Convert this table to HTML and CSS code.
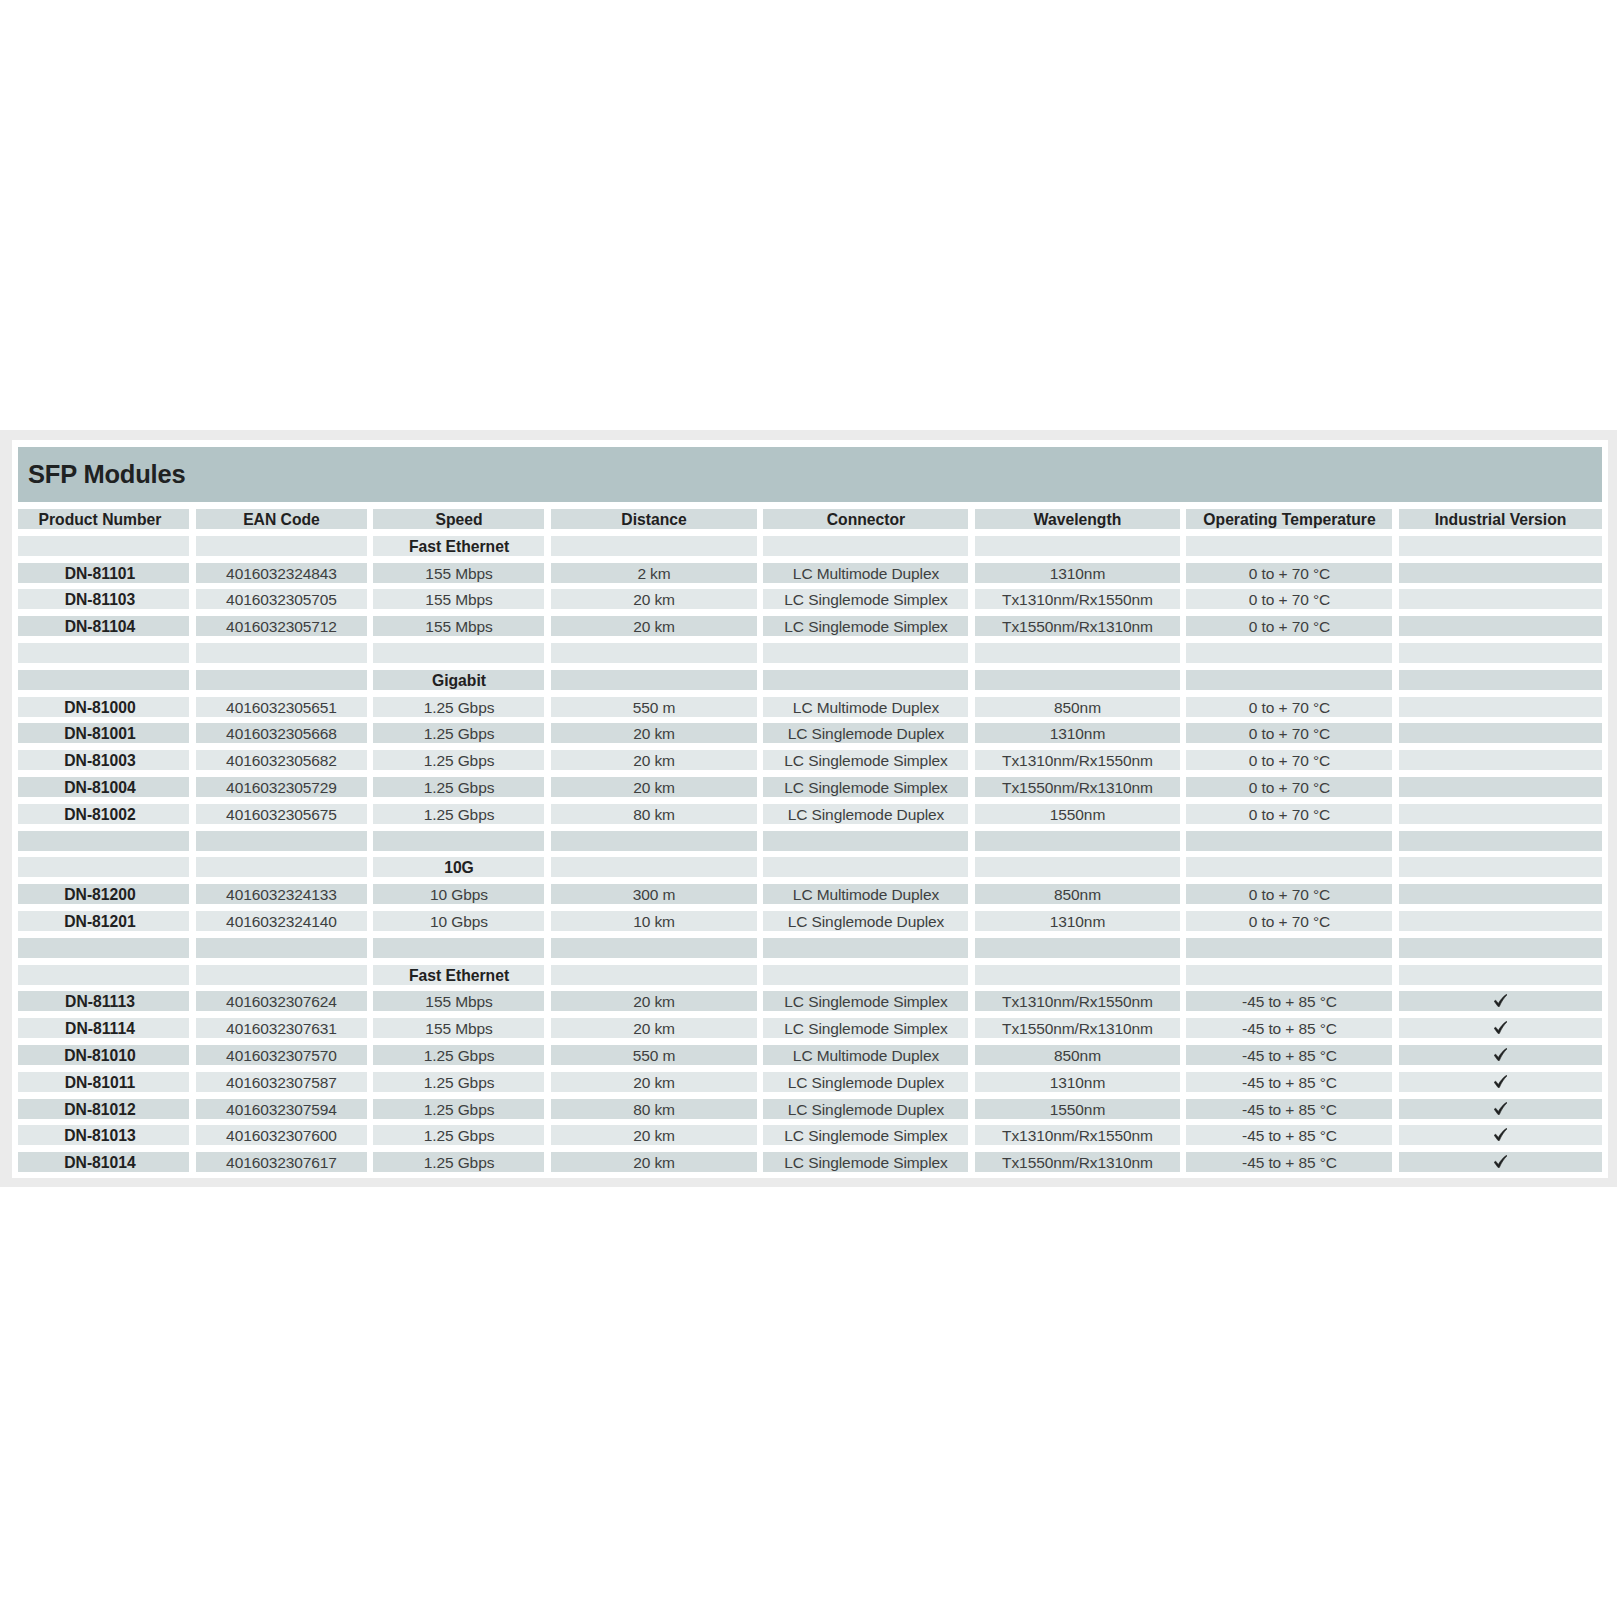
FILE: index.html
```html
<!DOCTYPE html>
<html lang="en">
<head>
<meta charset="utf-8">
<title>SFP Modules</title>
<link rel="stylesheet" href="styles.css">
</head>
<body>
<div class="frame">
  <div class="sheet">
    <div class="title">SFP Modules</div>
    <div class="rows">
      <div class="row head"><div class="c">Product Number</div><div class="c">EAN Code</div><div class="c">Speed</div><div class="c">Distance</div><div class="c">Connector</div><div class="c">Wavelength</div><div class="c">Operating Temperature</div><div class="c">Industrial Version</div></div>
      <div class="row"><div class="c"></div><div class="c"></div><div class="c b">Fast Ethernet</div><div class="c"></div><div class="c"></div><div class="c"></div><div class="c"></div><div class="c"></div></div>
      <div class="row"><div class="c b">DN-81101</div><div class="c">4016032324843</div><div class="c">155 Mbps</div><div class="c">2 km</div><div class="c">LC Multimode Duplex</div><div class="c">1310nm</div><div class="c">0 to + 70 °C</div><div class="c"></div></div>
      <div class="row"><div class="c b">DN-81103</div><div class="c">4016032305705</div><div class="c">155 Mbps</div><div class="c">20 km</div><div class="c">LC Singlemode Simplex</div><div class="c">Tx1310nm/Rx1550nm</div><div class="c">0 to + 70 °C</div><div class="c"></div></div>
      <div class="row"><div class="c b">DN-81104</div><div class="c">4016032305712</div><div class="c">155 Mbps</div><div class="c">20 km</div><div class="c">LC Singlemode Simplex</div><div class="c">Tx1550nm/Rx1310nm</div><div class="c">0 to + 70 °C</div><div class="c"></div></div>
      <div class="row"><div class="c"></div><div class="c"></div><div class="c"></div><div class="c"></div><div class="c"></div><div class="c"></div><div class="c"></div><div class="c"></div></div>
      <div class="row"><div class="c"></div><div class="c"></div><div class="c b">Gigabit</div><div class="c"></div><div class="c"></div><div class="c"></div><div class="c"></div><div class="c"></div></div>
      <div class="row"><div class="c b">DN-81000</div><div class="c">4016032305651</div><div class="c">1.25 Gbps</div><div class="c">550 m</div><div class="c">LC Multimode Duplex</div><div class="c">850nm</div><div class="c">0 to + 70 °C</div><div class="c"></div></div>
      <div class="row"><div class="c b">DN-81001</div><div class="c">4016032305668</div><div class="c">1.25 Gbps</div><div class="c">20 km</div><div class="c">LC Singlemode Duplex</div><div class="c">1310nm</div><div class="c">0 to + 70 °C</div><div class="c"></div></div>
      <div class="row"><div class="c b">DN-81003</div><div class="c">4016032305682</div><div class="c">1.25 Gbps</div><div class="c">20 km</div><div class="c">LC Singlemode Simplex</div><div class="c">Tx1310nm/Rx1550nm</div><div class="c">0 to + 70 °C</div><div class="c"></div></div>
      <div class="row"><div class="c b">DN-81004</div><div class="c">4016032305729</div><div class="c">1.25 Gbps</div><div class="c">20 km</div><div class="c">LC Singlemode Simplex</div><div class="c">Tx1550nm/Rx1310nm</div><div class="c">0 to + 70 °C</div><div class="c"></div></div>
      <div class="row"><div class="c b">DN-81002</div><div class="c">4016032305675</div><div class="c">1.25 Gbps</div><div class="c">80 km</div><div class="c">LC Singlemode Duplex</div><div class="c">1550nm</div><div class="c">0 to + 70 °C</div><div class="c"></div></div>
      <div class="row"><div class="c"></div><div class="c"></div><div class="c"></div><div class="c"></div><div class="c"></div><div class="c"></div><div class="c"></div><div class="c"></div></div>
      <div class="row"><div class="c"></div><div class="c"></div><div class="c b">10G</div><div class="c"></div><div class="c"></div><div class="c"></div><div class="c"></div><div class="c"></div></div>
      <div class="row"><div class="c b">DN-81200</div><div class="c">4016032324133</div><div class="c">10 Gbps</div><div class="c">300 m</div><div class="c">LC Multimode Duplex</div><div class="c">850nm</div><div class="c">0 to + 70 °C</div><div class="c"></div></div>
      <div class="row"><div class="c b">DN-81201</div><div class="c">4016032324140</div><div class="c">10 Gbps</div><div class="c">10 km</div><div class="c">LC Singlemode Duplex</div><div class="c">1310nm</div><div class="c">0 to + 70 °C</div><div class="c"></div></div>
      <div class="row"><div class="c"></div><div class="c"></div><div class="c"></div><div class="c"></div><div class="c"></div><div class="c"></div><div class="c"></div><div class="c"></div></div>
      <div class="row"><div class="c"></div><div class="c"></div><div class="c b">Fast Ethernet</div><div class="c"></div><div class="c"></div><div class="c"></div><div class="c"></div><div class="c"></div></div>
      <div class="row"><div class="c b">DN-81113</div><div class="c">4016032307624</div><div class="c">155 Mbps</div><div class="c">20 km</div><div class="c">LC Singlemode Simplex</div><div class="c">Tx1310nm/Rx1550nm</div><div class="c">-45 to + 85 °C</div><div class="c chk"><svg class="tick" viewBox="0 0 12 12" aria-label="yes"><path d="M0.2 6.7 L1.5 5.7 L4 8.7 C6 5.3 8.6 2.3 11.6 0.3 L12 0.8 C9.3 3.4 6.9 6.9 4.9 11.6 L3.8 11.6 Z"/></svg></div></div>
      <div class="row"><div class="c b">DN-81114</div><div class="c">4016032307631</div><div class="c">155 Mbps</div><div class="c">20 km</div><div class="c">LC Singlemode Simplex</div><div class="c">Tx1550nm/Rx1310nm</div><div class="c">-45 to + 85 °C</div><div class="c chk"><svg class="tick" viewBox="0 0 12 12" aria-label="yes"><path d="M0.2 6.7 L1.5 5.7 L4 8.7 C6 5.3 8.6 2.3 11.6 0.3 L12 0.8 C9.3 3.4 6.9 6.9 4.9 11.6 L3.8 11.6 Z"/></svg></div></div>
      <div class="row"><div class="c b">DN-81010</div><div class="c">4016032307570</div><div class="c">1.25 Gbps</div><div class="c">550 m</div><div class="c">LC Multimode Duplex</div><div class="c">850nm</div><div class="c">-45 to + 85 °C</div><div class="c chk"><svg class="tick" viewBox="0 0 12 12" aria-label="yes"><path d="M0.2 6.7 L1.5 5.7 L4 8.7 C6 5.3 8.6 2.3 11.6 0.3 L12 0.8 C9.3 3.4 6.9 6.9 4.9 11.6 L3.8 11.6 Z"/></svg></div></div>
      <div class="row"><div class="c b">DN-81011</div><div class="c">4016032307587</div><div class="c">1.25 Gbps</div><div class="c">20 km</div><div class="c">LC Singlemode Duplex</div><div class="c">1310nm</div><div class="c">-45 to + 85 °C</div><div class="c chk"><svg class="tick" viewBox="0 0 12 12" aria-label="yes"><path d="M0.2 6.7 L1.5 5.7 L4 8.7 C6 5.3 8.6 2.3 11.6 0.3 L12 0.8 C9.3 3.4 6.9 6.9 4.9 11.6 L3.8 11.6 Z"/></svg></div></div>
      <div class="row"><div class="c b">DN-81012</div><div class="c">4016032307594</div><div class="c">1.25 Gbps</div><div class="c">80 km</div><div class="c">LC Singlemode Duplex</div><div class="c">1550nm</div><div class="c">-45 to + 85 °C</div><div class="c chk"><svg class="tick" viewBox="0 0 12 12" aria-label="yes"><path d="M0.2 6.7 L1.5 5.7 L4 8.7 C6 5.3 8.6 2.3 11.6 0.3 L12 0.8 C9.3 3.4 6.9 6.9 4.9 11.6 L3.8 11.6 Z"/></svg></div></div>
      <div class="row"><div class="c b">DN-81013</div><div class="c">4016032307600</div><div class="c">1.25 Gbps</div><div class="c">20 km</div><div class="c">LC Singlemode Simplex</div><div class="c">Tx1310nm/Rx1550nm</div><div class="c">-45 to + 85 °C</div><div class="c chk"><svg class="tick" viewBox="0 0 12 12" aria-label="yes"><path d="M0.2 6.7 L1.5 5.7 L4 8.7 C6 5.3 8.6 2.3 11.6 0.3 L12 0.8 C9.3 3.4 6.9 6.9 4.9 11.6 L3.8 11.6 Z"/></svg></div></div>
      <div class="row"><div class="c b">DN-81014</div><div class="c">4016032307617</div><div class="c">1.25 Gbps</div><div class="c">20 km</div><div class="c">LC Singlemode Simplex</div><div class="c">Tx1550nm/Rx1310nm</div><div class="c">-45 to + 85 °C</div><div class="c chk"><svg class="tick" viewBox="0 0 12 12" aria-label="yes"><path d="M0.2 6.7 L1.5 5.7 L4 8.7 C6 5.3 8.6 2.3 11.6 0.3 L12 0.8 C9.3 3.4 6.9 6.9 4.9 11.6 L3.8 11.6 Z"/></svg></div></div>
    </div>
  </div>
</div>
</body>
</html>
```

FILE: styles.css
```css
html, body {
  margin: 0;
  padding: 0;
  background: #ffffff;
}

body {
  font-family: "Liberation Sans", Arial, sans-serif;
  width: 1620px;
  height: 1620px;
  overflow: hidden;
}

.frame {
  margin-top: 430px;
  width: 1596px;
  padding: 10px 9px 9px 12px;
  background: #ebebeb;
}

.sheet {
  background: #ffffff;
  padding: 7px 6px 6px 6px;
  display: flex;
  flex-direction: column;
  gap: 7px;
}

.title {
  height: 55px;
  background: #b3c4c6;
  color: #1f2222;
  font-weight: bold;
  font-size: 25.5px;
  line-height: 55px;
  padding-left: 10px;
  letter-spacing: -0.2px;
}

.rows {
  display: flex;
  flex-direction: column;
  gap: 6.8px;
}

.row {
  display: grid;
  grid-template-columns: 171px 171px 171px 206px 205px 205px 206px 203px;
  column-gap: 6.5px;
  height: 20px;
}

.c {
  background: #e2e8e9;
  height: 20px;
  line-height: 21px;
  text-align: center;
  font-size: 15.5px;
  color: #3d3f40;
  white-space: nowrap;
  letter-spacing: -0.1px;
  padding-left: 1px;
}

.c:first-child {
  padding-left: 0;
  padding-right: 7px;
}

.row:nth-child(odd) .c {
  background: #d3dcdd;
}

.head .c,
.c.b {
  font-weight: bold;
  font-size: 15.7px;
  color: #1f2121;
  letter-spacing: 0;
}

.c.chk {
  display: flex;
  align-items: center;
  justify-content: center;
}

.tick {
  width: 13px;
  height: 13px;
  fill: #1f2121;
  stroke: #1f2121;
  stroke-width: 0.6;
  stroke-linejoin: round;
  margin-top: -1px;
}
```
